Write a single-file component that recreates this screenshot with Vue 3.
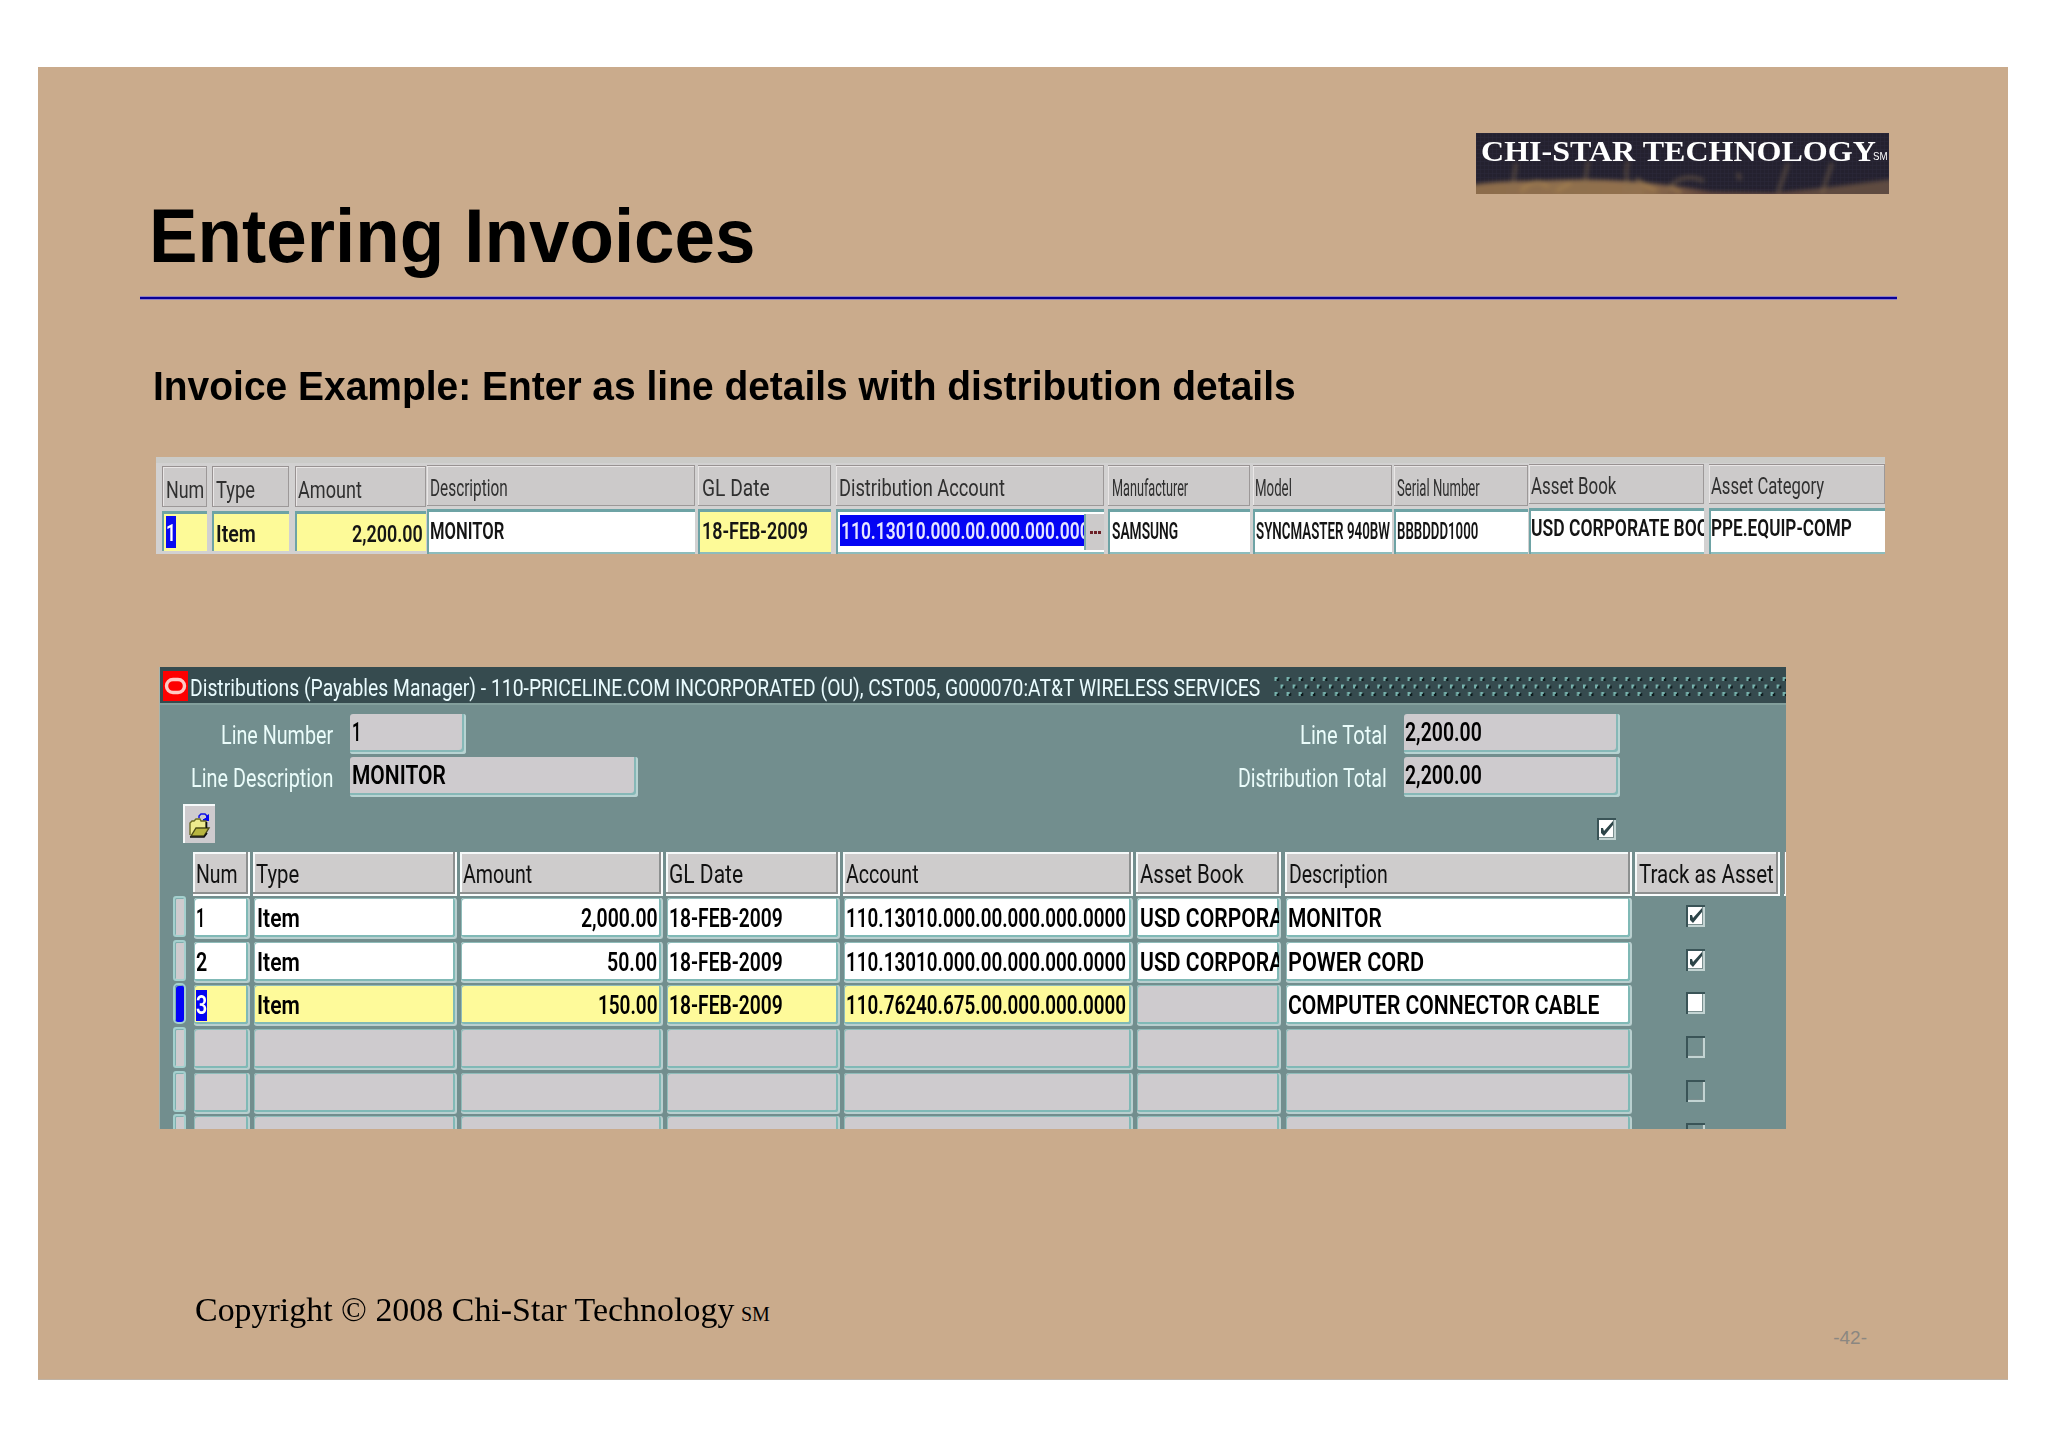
<script setup>
const squeeze = (el, { value }) => {
  el.style.transform = 'none'
  const natural = el.offsetWidth
  if (natural) el.style.transform = `scaleX(${value / natural})`
}
const vFit = { mounted: squeeze, updated: squeeze }

// ml: gap before the column, w: column width, tw/vw: text widths
const lineCols = [
  { g: 'a', ml: 6, w: 45, head: 'Num', hp: 4, tw: 38, value: '1', vp: 4, vw: 10, kind: 'yellow sel' },
  { g: 'a', ml: 5, w: 77, head: 'Type', hp: 4, tw: 39, value: 'Item', vp: 4, vw: 40, kind: 'yellow' },
  { g: 'a', ml: 6, w: 131, head: 'Amount', hp: 3, tw: 64, value: '2,200.00', vp: 3, vw: 71, kind: 'yellow right' },
  { g: 'b', ml: 1, w: 268, head: 'Description', hp: 3, tw: 78, value: 'MONITOR', vp: 3, vw: 74 },
  { g: 'b', ml: 3, w: 133, head: 'GL Date', hp: 4, tw: 68, value: '18-FEB-2009', vp: 4, vw: 106, kind: 'yellow' },
  { g: 'b', ml: 5, w: 268, head: 'Distribution Account', hp: 3, tw: 166, value: '110.13010.000.00.000.000.000', vp: 4, vw: 249, kind: 'acct' },
  { g: 'b', ml: 4, w: 142, head: 'Manufacturer', hp: 4, tw: 76, value: 'SAMSUNG', vp: 4, vw: 66 },
  { g: 'b', ml: 3, w: 139, head: 'Model', hp: 2, tw: 37, value: 'SYNCMASTER 940BW', vp: 3, vw: 134 },
  { g: 'b', ml: 2, w: 134, head: 'Serial Number', hp: 3, tw: 83, value: 'BBBDDD1000', vp: 3, vw: 81 },
  { g: 'c', ml: 1, w: 175, head: 'Asset Book', hp: 2, tw: 85, value: 'USD CORPORATE BOO', vp: 2, vw: 178 },
  { g: 'c', ml: 5, w: 176, head: 'Asset Category', hp: 2, tw: 113, value: 'PPE.EQUIP-COMP', vp: 2, vw: 141 },
]

const heads = [
  { t: 'Num', p: 3, w: 42 }, { t: 'Type', p: 3, w: 43 }, { t: 'Amount', p: 3, w: 69 },
  { t: 'GL Date', p: 3, w: 74 }, { t: 'Account', p: 3, w: 73 }, { t: 'Asset Book', p: 4, w: 104 },
  { t: 'Description', p: 4, w: 99 }, { t: 'Track as Asset', p: 4, w: 135 }, { t: '', p: 0, w: 0 },
]

const acct = '110.13010.000.00.000.000.0000'
const rows = [
  { c: [['1', 9], ['Item', 43], ['2,000.00', 77], ['18-FEB-2009', 114], [acct, 280], ['USD CORPORA', 143], ['MONITOR', 94]], box: 'on' },
  { c: [['2', 11], ['Item', 43], ['50.00', 50], ['18-FEB-2009', 114], [acct, 280], ['USD CORPORA', 143], ['POWER CORD', 136]], box: 'on' },
  { c: [['3', 11], ['Item', 43], ['150.00', 60], ['18-FEB-2009', 114], ['110.76240.675.00.000.000.0000', 280], ['', 0], ['COMPUTER CONNECTOR CABLE', 311]], box: 'off', active: true },
  { c: Array(7).fill(['', 0]), box: 'none' },
  { c: Array(7).fill(['', 0]), box: 'none' },
  { c: Array(7).fill(['', 0]), box: 'none' },
]
const cellKind = (row, i) => {
  if (!row.c[i][0]) return 'empty'
  return row.active && i < 5 ? 'current' : ''
}
</script>

<template>
  <main class="slide">
    <header class="top">
      <div class="logo">
        <svg class="art" width="413" height="61" viewBox="0 0 413 61" preserveAspectRatio="none">
          <defs>
            <filter id="soft" x="-5%" y="-20%" width="110%" height="140%"><feGaussianBlur stdDeviation="2" /></filter>
            <linearGradient id="sand" x1="0" x2="1">
              <stop offset="0" stop-color="#8c6c4c" /><stop offset=".4" stop-color="#92714f" />
              <stop offset=".55" stop-color="#66493d" /><stop offset="1" stop-color="#5e4c42" />
            </linearGradient>
            <pattern id="grid" width="4" height="4" patternUnits="userSpaceOnUse">
              <path d="M0 0H4M0 0V4" stroke="#34324a" stroke-width="1" />
            </pattern>
          </defs>
          <rect width="413" height="61" fill="#24212f" />
          <rect width="413" height="61" fill="url(#grid)" opacity=".45" />
          <g filter="url(#soft)">
            <path d="M-5 52Q20 48 60 48Q110 45 150 48Q200 52 235 59L300 60Q360 54 418 46V68H-5Z" fill="url(#sand)" />
            <path d="M40 30L36 58M112 28L108 58M152 28Q148 42 154 58M190 58Q205 38 228 48M312 30L302 60M356 30L346 60M262 40L264 47" stroke="#8b7250" stroke-width="4" fill="none" opacity=".4" />
            <path d="M45 58Q60 42 72 54M80 58L95 50M160 46L180 58M195 54L205 60" stroke="#b08a52" stroke-width="4" fill="none" opacity=".45" />
          </g>
        </svg>
        <span v-fit="395" class="brand">CHI-STAR TECHNOLOGY</span>
        <span v-fit="15" class="brand-sm">SM</span>
      </div>
    </header>

    <h1><span v-fit="607">Entering Invoices</span></h1>
    <div class="rule"></div>
    <h2><span v-fit="1143">Invoice Example: Enter as line details with distribution details</span></h2>

    <section class="lines">
      <div v-for="col in lineCols" :key="col.head" class="lcol" :class="'g-' + col.g"
        :style="{ width: col.w + 'px', marginLeft: col.ml + 'px' }">
        <div class="lhead" :style="{ paddingLeft: col.hp + 'px' }"><span v-fit="col.tw">{{ col.head }}</span></div>
        <div class="lcell" :class="col.kind" :style="{ paddingLeft: col.vp + 'px', paddingRight: col.vp + 'px' }">
          <div v-if="col.kind === 'acct'" class="acct-text"><span v-fit="col.vw">{{ col.value }}</span></div>
          <span v-else v-fit="col.vw">{{ col.value }}</span>
          <i v-if="col.kind === 'acct'" class="lov"><b></b><b></b><b></b></i>
        </div>
      </div>
    </section>

    <section class="window">
      <div class="titlebar">
        <svg class="oracle" width="25" height="30" viewBox="0 0 25 30">
          <rect width="25" height="30" fill="#fe0000" />
          <rect x="3.500" y="8.500" width="18" height="13" rx="6.500" fill="none" stroke="#ffc9c4" stroke-width="3.400" />
        </svg>
        <span v-fit="1070" class="wtitle">Distributions (Payables Manager) - 110-PRICELINE.COM INCORPORATED (OU), CST005, G000070:AT&amp;T WIRELESS SERVICES</span>
        <svg class="dots" width="512" height="24">
          <defs>
            <pattern id="knurl" width="12.1" height="24" patternUnits="userSpaceOnUse">
              <path d="M2 2h3v3h-3zM2 17h3v3h-3zM8 9.500h3v3h-3z" fill="#0a1719" />
              <path d="M.5 1h3v2h-1v2h-2zM.5 16h3v2h-1v2h-2zM6.500 8.500h3v2h-1v2h-2z" fill="#78b3ae" />
            </pattern>
          </defs>
          <rect width="512" height="24" fill="url(#knurl)" />
        </svg>
      </div>

      <div class="form">
        <div class="fields left">
          <label><span v-fit="112">Line Number</span></label><div class="field short"><span v-fit="9">1</span></div>
          <label><span v-fit="142">Line Description</span></label><div class="field"><span v-fit="94">MONITOR</span></div>
        </div>
        <div class="fields totals">
          <label><span v-fit="87">Line Total</span></label><div class="field"><span v-fit="77">2,200.00</span></div>
          <label><span v-fit="149">Distribution Total</span></label><div class="field"><span v-fit="77">2,200.00</span></div>
        </div>
      </div>

      <div class="tools">
        <div class="folder">
          <svg width="22" height="25" viewBox="0 0 22 25">
            <path d="M10 5V3l2-2h4l2 2" fill="none" stroke="#1010e8" stroke-width="1.500" />
            <path d="M20 1v7h-6V6h2l-1-1h2V3z" fill="#0808f0" />
            <path d="M1 22V10l2-2h2l2-2h4l1 2h5v7" fill="#eeea8e" stroke="#6b6a22" stroke-width="1.400" />
            <path d="M2 23l5-8h13l-5 8z" fill="#b8b540" stroke="#4c4b16" stroke-width="1.400" />
            <path d="M1 24h14l3-4M17.500 9v6" fill="none" stroke="#111" stroke-width="1.600" />
          </svg>
        </div>
        <div class="check on"><svg viewBox="0 0 18 21"><path d="M4 10v5l3 3 9-11V3L7 13 6 10z" /></svg></div>
      </div>

      <div class="grid heads">
        <i></i>
        <div v-for="h in heads" :key="h.t" class="hcell" :style="{ paddingLeft: h.p + 'px' }"><span v-fit="h.w">{{ h.t }}</span></div>
      </div>
      <div v-for="(row, r) in rows" :key="r" class="grid row" :class="{ active: row.active }">
        <i class="marker"></i>
        <div v-for="(c, i) in row.c" :key="i" class="cell" :class="['c' + i, cellKind(row, i)]">
          <span v-fit="c[1]" :class="{ picked: row.active && i === 0 }">{{ c[0] }}</span>
        </div>
        <div class="check" :class="row.box"><svg v-if="row.box === 'on'" viewBox="0 0 18 21"><path d="M4 10v5l3 3 9-11V3L7 13 6 10z" /></svg></div>
      </div>
    </section>

    <footer>
      <div class="copy"><span v-fit="539">Copyright © 2008 Chi-Star Technology</span></div>
      <span class="copy-sm">SM</span>
      <span v-fit="34" class="page">-42-</span>
    </footer>
  </main>
</template>

<style>
body { background: #fff; }
</style>

<style scoped>
* { box-sizing: border-box; }
.slide {
  display: flex; flex-direction: column; width: 1970px; height: 1313px; margin: 67px 0 67px 38px;
  background: #caab8c; border-bottom: 1px solid #bfb3a5; font-family: Roboto, "Liberation Sans", sans-serif; color: #000;
}
span { display: inline-block; white-space: nowrap; transform-origin: 0 50%; }
.top { display: flex; justify-content: flex-end; padding: 66px 119px 0 0; }
.logo { position: relative; width: 413px; height: 61px; overflow: hidden; }
.art { display: block; }
.brand { position: absolute; left: 5px; top: 0; font: bold 30px/36px "Liberation Serif", serif; color: #fff; }
.brand-sm { position: absolute; left: 397px; top: 14px; font: 11px/18px "Liberation Sans", sans-serif; color: #fff; }
h1 { margin: 0 0 0 111px; height: 102px; font: bold 76px/84px "Liberation Sans", sans-serif; }
.rule { width: 1757px; height: 4px; margin-left: 102px; background: #0a0096; border: solid #8f7fc4; border-width: 1px 0; }
h2 { margin: 63px 0 0 115px; height: 94px; font: bold 40px/46px "Liberation Sans", sans-serif; }

.lines { display: flex; flex: none; width: 1729px; height: 97px; margin-left: 118px; background: #d2d1d1; font-size: 24px; overflow: hidden; box-shadow: inset 0 6px #cbcbc8; }
.lcol { display: flex; flex-direction: column; flex: none; }
.lhead { background: #cccaca; color: #303030; overflow: hidden; box-shadow: inset 1px 1px #989292, inset -1px -1px #9c9898, inset 2px 2px #e9e6e6; }
.lcell { display: flex; background: #fff; overflow: hidden; color: #141414; font-weight: 600; box-shadow: inset 2px 3px #6ea3a5, inset 0 -2px #8dbcbc; }
.lcell.yellow { background: #fdfa98; }
.lcell.right { justify-content: flex-end; }
.lcell.right span { transform-origin: 100% 50%; }
.g-a .lhead { margin-top: 9px; height: 41px; line-height: 48px; }
.g-a .lcell { margin-top: 4px; line-height: 46px; height: 40px; box-shadow: inset 2px 3px #6ea3a5; }
.g-b .lhead { margin-top: 8px; height: 41px; line-height: 46px; }
.g-b .lcell { margin-top: 3px; height: 45px; line-height: 44px; }
.g-c .lhead { margin-top: 7px; height: 40px; line-height: 44px; }
.g-c .lcell { margin-top: 4px; height: 46px; line-height: 41px; }
.g-b .lhead, .g-c .lhead { box-shadow: inset 0 1px #989292, inset -1px -1px #9c9898, inset 1px 2px #e9e6e6; }
.lcell.sel span { margin-top: 5px; height: 32px; line-height: 35px; background: #0a0af0; color: #fff; }
.lcell.acct { background: #fff; padding-right: 0 !important; }
.acct-text { width: 244px; height: 31px; margin-top: 6px; padding-left: 1px; line-height: 33px; background: #0404f4; color: #e6e6ff; overflow: hidden; flex: none; }
.lov { display: flex; gap: 1px; justify-content: center; align-items: center; width: 20px; height: 36px; margin-top: 5px; background: #cccaca; border-left: 2px solid #7ba9a9; }
.lov b { width: 3px; height: 3px; background: #6b2026; }

.window { flex: none; width: 1627px; height: 462px; margin: 113px 0 0 121px; overflow: hidden; background: #728e8e; font-size: 25px; border-left: 1px solid #a7b5ae; }
.titlebar { position: relative; display: flex; height: 38px; padding: 4px 0 0 3px; background: #364b4f; border-bottom: 2px solid #839f9c; color: #eafcff; font-size: 23.5px; overflow: hidden; }
.oracle { flex: none; }
.wtitle { margin-left: 2px; line-height: 34px; }
.dots { position: absolute; right: 0; top: 9px; }
.form { display: flex; height: 99px; padding-top: 9px; }
.fields { display: grid; grid-auto-rows: 40px; row-gap: 3px; column-gap: 17px; }
.fields.left { grid-template-columns: 173px 288px; }
.fields.totals { grid-template-columns: 749px 216px; }
.fields label { color: #eafcfa; line-height: 43px; display: flex; justify-content: flex-end; }
.fields label span { transform-origin: 100% 50%; }
.field { padding-left: 2px; background: #cecbce; line-height: 38px; font-weight: 600; border-radius: 3px; box-shadow: inset -2px -2px #b8d3d2, inset -4px -4px #86b8b7; }
.field.short { width: 116px; }
.totals .field { padding-left: 1px; }
.tools { display: flex; height: 48px; }
.folder { width: 32px; height: 39px; margin-left: 23px; padding: 7px 0 0 4px; background: #cecbce; border-left: 2px solid #f6fafa; border-top: 2px solid #f6fafa; }
.tools .check { margin: 14px 0 0 1382px; }
.check { width: 19px; height: 22px; background: #fff; box-shadow: inset 2px 2px #3a5457, inset -2px -2px #c3d4d3, inset -3px -3px #7b8f8f; }
.check svg { display: block; width: 18px; height: 21px; fill: #2c4448; }
.check.none { background: #728e8e; }
.grid { display: grid; grid-template-columns: 16.5px 56.5px 203.5px 202.5px 173.5px 289.5px 145px 347px 145px 3px; column-gap: 3.5px; padding-left: 13px; }
.heads { height: 46px; }
.hcell { height: 44px; overflow: hidden; line-height: 46px; background: #cecccc; color: #111; box-shadow: inset -2px -2px #fafdfd, inset -4px -4px #8d9090, inset 2px 2px #f6fafa; }
.row { height: 43.7px; }
.cell { height: 41px; margin-left: 1px; padding-left: 2px; overflow: hidden; line-height: 41px; font-weight: 600; background: #fff; border: solid #b9cfcf; border-width: 0 2px 2px 0; border-radius: 3px; box-shadow: inset -2px -2px #80b9b6, inset 1px 1px #8fbcba; }
.cell.c1, .cell.c5 { padding-left: 3px; }
.cell.c2 { display: flex; justify-content: flex-end; padding-right: 3px; }
.cell.c2 span { transform-origin: 100% 50%; }
.cell.current { background: #fefa9a; }
.cell.empty { background: #cecbce; }
.cell .picked { height: 31px; margin-top: 4px; line-height: 32px; background: #0505f2; color: #fff; }
.marker { width: 13px; height: 41px; margin-top: -2px; background: #cecbce; border: 2px solid #a4d0ce; border-radius: 3px; box-shadow: inset 1px 1px #7fb0af; }
.active .marker { background: #0202f8; border-radius: 5px; }
.row .check { margin: 7px 0 0 51px; }

footer { display: flex; align-items: flex-start; padding-top: 161px; font-family: "Liberation Serif", serif; }
.copy { width: 546px; margin-left: 157px; font-size: 34px; line-height: 40px; }
.copy-sm { font-size: 20px; line-height: 24px; margin-top: 12px; }
.page { margin: 36px 0 0 auto; position: relative; right: 141px; transform-origin: 100% 50%; font: 19px/24px "Liberation Sans", sans-serif; color: #8b8781; }
</style>
